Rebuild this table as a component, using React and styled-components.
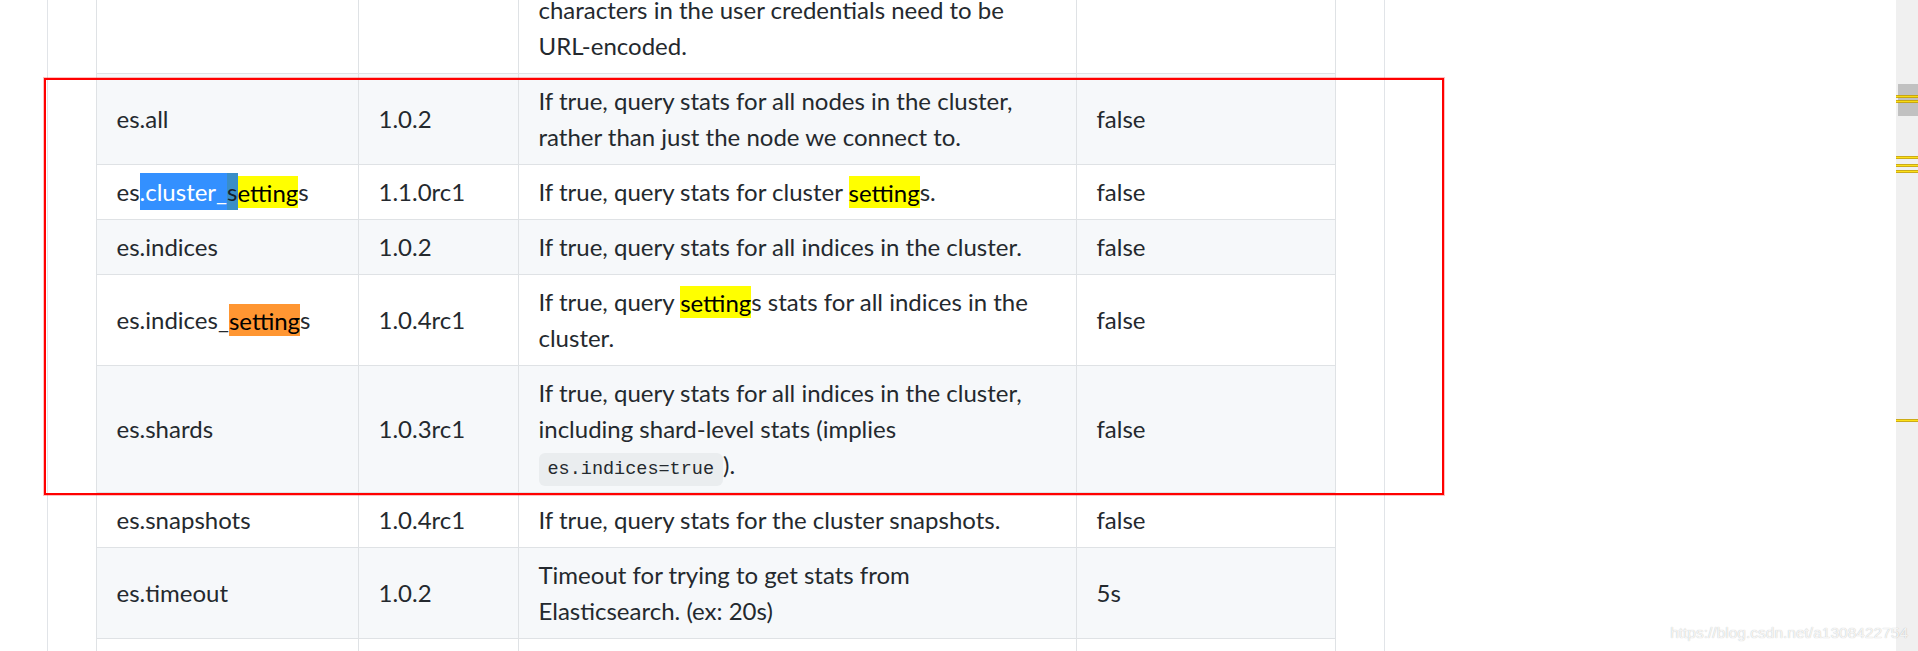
import React from 'react'
import styled, { createGlobalStyle } from 'styled-components'

const GlobalStyle = createGlobalStyle`
  html, body {
    margin: 0;
    padding: 0;
    height: 100%;
    overflow: hidden;
    background: #fff;
  }
  #root {
    height: 100%;
  }
`

const Page = styled.div`
  position: relative;
  display: flex;
  height: 100vh;
  overflow: hidden;
`

const Viewport = styled.main`
  position: relative;
  flex: 1;
  overflow: hidden;
`

// the page is scrolled: the first visible row starts above the top edge
const Article = styled.article`
  width: 1239px;
  margin: -162px 0 0 47px;
  padding: 0 49px 120px 48px;
  border-left: 1px solid #e1e4e8;
  border-right: 1px solid #e1e4e8;
  font-family: Lato, 'Segoe UI', 'Noto Sans', sans-serif;
  font-size: 24px;
  line-height: 36px;
  color: #24292e;
`

const Table = styled.table`
  width: 1239px;
  table-layout: fixed;
  border-collapse: collapse;
  border-spacing: 0;

  tr {
    background: #fff;
  }
  tr:nth-child(2n) {
    background: #f6f8fa;
  }
`

const Col = styled.col`
  width: ${(p) => p.$w}px;
`

const Cell = styled.td`
  padding: 9px 19.5px;
  border: 1px solid #dfe2e5;
  vertical-align: middle;
  overflow-wrap: break-word;
`

const Hit = styled.mark`
  background: ${(p) => (p.$current ? '#ff9632' : '#ffff00')};
  color: #000;
  padding: 1.5px 0;
`

const Selected = styled.span`
  background: ${(p) => (p.$overlap ? '#3a8ec8' : '#3390ff')};
  color: ${(p) => (p.$overlap ? '#15202b' : '#fff')};
  padding: 3.6px 0;
`

const Code = styled.code`
  font-family: 'Liberation Mono', 'DejaVu Sans Mono', monospace;
  font-size: 18.5px;
  line-height: 1;
  padding: 6px 9px;
  background: rgba(27, 31, 35, 0.05);
  border-radius: 6px;
`

const Annotation = styled.div`
  position: absolute;
  left: 44px;
  top: 78px;
  width: 1400px;
  height: 417px;
  box-sizing: border-box;
  border: 2px solid #ff0000;
  box-shadow: 0 0 0 1px rgba(255, 0, 0, 0.25);
  pointer-events: none;
`

const Track = styled.aside`
  position: relative;
  flex: none;
  width: 22px;
  background: #f0f0f0;
`

const Thumb = styled.div`
  margin: 84px 0 0 2px;
  height: 32px;
  background: #c1c1c1;
`

const Tick = styled.div`
  position: absolute;
  left: 0;
  right: 0;
  top: ${(p) => p.$y}px;
  height: 3px;
  box-sizing: border-box;
  background: #ffe000;
  border-top: 1px solid #c9a400;
  border-bottom: 1px solid #c9a400;
  opacity: 0.9;
`

const Watermark = styled.div`
  position: absolute;
  right: 10px;
  bottom: 11px;
  font: 15.5px/1 'Liberation Sans', Arial, sans-serif;
  color: rgba(255, 255, 255, 0.85);
  text-shadow: 0 0 1px rgba(0, 0, 0, 0.3);
  pointer-events: none;
`

const rows = [
  {
    name: 'es.uri',
    version: '1.0.2',
    desc: (
      <>
        Address (host and port) of the
        <br />
        Elasticsearch node we should connect to.
        <br />
        When basic auth is needed, specify as:
        <br />
        http://admin:pass@localhost:9200. Special
        <br />
        characters in the user credentials need to be
        <br />
        URL-encoded.
      </>
    ),
    def: 'http://localhost:9200',
  },
  {
    name: 'es.all',
    version: '1.0.2',
    desc: 'If true, query stats for all nodes in the cluster, rather than just the node we connect to.',
    def: 'false',
  },
  {
    name: (
      <>
        es<Selected>.cluster_</Selected>
        <Hit>
          <Selected $overlap>s</Selected>etting
        </Hit>
        s
      </>
    ),
    version: '1.1.0rc1',
    desc: (
      <>
        If true, query stats for cluster <Hit>setting</Hit>s.
      </>
    ),
    def: 'false',
  },
  {
    name: 'es.indices',
    version: '1.0.2',
    desc: 'If true, query stats for all indices in the cluster.',
    def: 'false',
  },
  {
    name: (
      <>
        es.indices_<Hit $current>setting</Hit>s
      </>
    ),
    version: '1.0.4rc1',
    desc: (
      <>
        If true, query <Hit>setting</Hit>s stats for all indices in the cluster.
      </>
    ),
    def: 'false',
  },
  {
    name: 'es.shards',
    version: '1.0.3rc1',
    desc: (
      <>
        If true, query stats for all indices in the cluster, including shard-level stats (implies{' '}
        <Code>es.indices=true</Code>).
      </>
    ),
    def: 'false',
  },
  {
    name: 'es.snapshots',
    version: '1.0.4rc1',
    desc: 'If true, query stats for the cluster snapshots.',
    def: 'false',
  },
  {
    name: 'es.timeout',
    version: '1.0.2',
    desc: 'Timeout for trying to get stats from Elasticsearch. (ex: 20s)',
    def: '5s',
  },
  {
    name: 'es.ca',
    version: '1.0.2',
    desc: 'Path to PEM file that contains trusted Certificate Authorities for the Elasticsearch connection.',
    def: '',
  },
  {
    name: 'es.client-private-key',
    version: '1.0.2',
    desc: 'Path to PEM file that contains the private key for client auth when connecting to Elasticsearch.',
    def: '',
  },
]

const ticks = [95, 100, 156, 164, 170, 419]

export default function App() {
  return (
    <>
      <GlobalStyle />
      <Page>
        <Viewport>
          <Article>
            <Table>
              <colgroup>
                <Col $w={262} />
                <Col $w={160} />
                <Col $w={558} />
                <Col $w={259} />
              </colgroup>
              <tbody>
                {rows.map((r, i) => (
                  <tr key={i}>
                    <Cell>{r.name}</Cell>
                    <Cell>{r.version}</Cell>
                    <Cell>{r.desc}</Cell>
                    <Cell>{r.def}</Cell>
                  </tr>
                ))}
              </tbody>
            </Table>
          </Article>
          <Annotation />
        </Viewport>
        <Track>
          <Thumb />
          {ticks.map((y) => (
            <Tick key={y} $y={y} />
          ))}
        </Track>
        <Watermark>https://blog.csdn.net/a1308422754</Watermark>
      </Page>
    </>
  )
}
